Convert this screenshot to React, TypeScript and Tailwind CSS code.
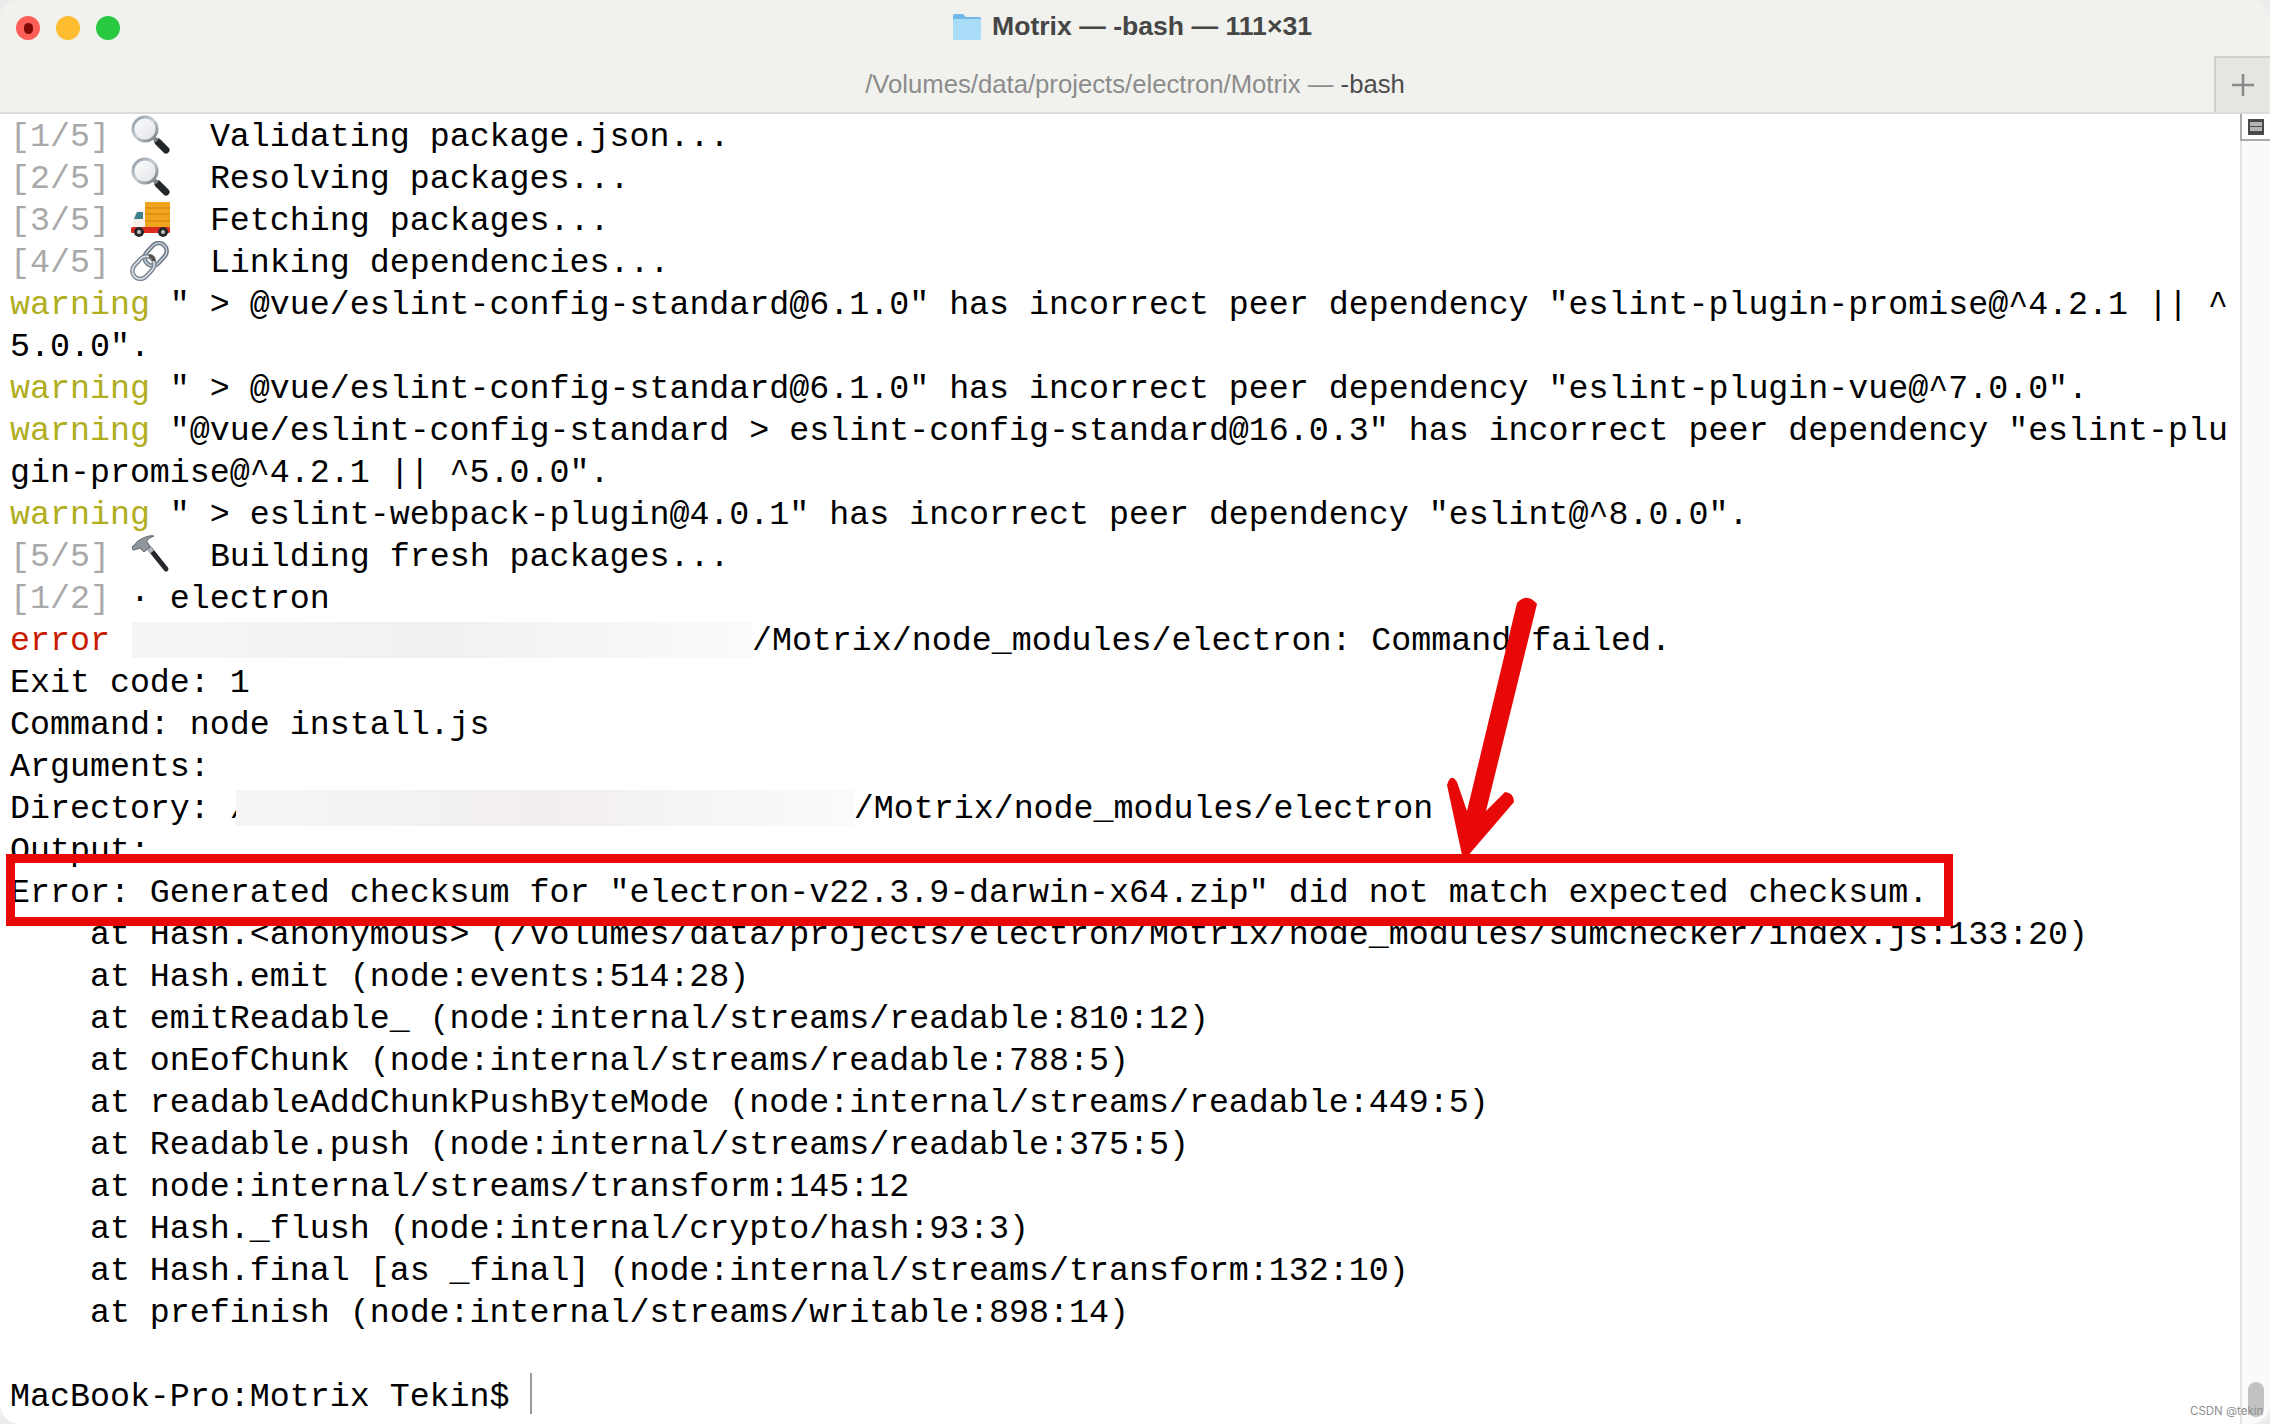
import React from 'react';

const Magnifier = () => (
    <svg viewBox="0 0 40 40" className="w-[40px] h-[40px] shrink-0 -translate-y-[3px]">
        <defs>
            <linearGradient id="lens" x1="0" y1="0" x2="1" y2="1">
                <stop offset="0" stopColor="#ffffff" />
                <stop offset="1" stopColor="#dfe2e6" />
            </linearGradient>
            <linearGradient id="ring" x1="0" y1="0" x2="1" y2="1">
                <stop offset="0" stopColor="#8f99a3" />
                <stop offset="0.5" stopColor="#c9ced3" />
                <stop offset="1" stopColor="#6f7780" />
            </linearGradient>
        </defs>
        <line x1="28" y1="27" x2="36" y2="35" stroke="#23272b" strokeWidth="7" strokeLinecap="round" />
        <line x1="23" y1="22" x2="27" y2="26" stroke="#7d848b" strokeWidth="4" />
        <circle cx="15" cy="14" r="12" fill="url(#lens)" stroke="url(#ring)" strokeWidth="3" />
    </svg>
);

const Truck = () => (
    <svg viewBox="0 0 40 40" className="w-[40px] h-[40px] shrink-0 -translate-y-[3px]">
        <rect x="15" y="3" width="25" height="26" fill="#f0a51c" />
        <path d="M15 9h25M15 15h25M15 22h25" stroke="#c97f12" strokeWidth="1.2" />
        <path d="M3 29v-11l4-7h8v18z" fill="#f4f1ea" />
        <path d="M4 20l3-7h6v7z" fill="#3d7f8c" />
        <rect x="1" y="28" width="39" height="6" rx="1.5" fill="#dd2a20" />
        <circle cx="9" cy="33" r="5" fill="#26282b" />
        <circle cx="9" cy="33" r="2" fill="#c8c8c8" />
        <circle cx="33" cy="33" r="5" fill="#26282b" />
        <circle cx="33" cy="33" r="2" fill="#c8c8c8" />
    </svg>
);

const ChainLink = () => (
    <svg viewBox="0 0 40 40" className="w-[40px] h-[40px] shrink-0 -translate-y-[3px]" fill="none">
        <g transform="rotate(42 26 13)">
            <rect x="18" y="1" width="16" height="25" rx="8" stroke="#6f7b87" strokeWidth="4.5" />
            <rect x="18" y="1" width="16" height="25" rx="8" stroke="#c4ccd3" strokeWidth="1.5" />
        </g>
        <g transform="rotate(42 13 27)">
            <rect x="5" y="14" width="16" height="25" rx="8" stroke="#7d8995" strokeWidth="4.5" />
            <rect x="5" y="14" width="16" height="25" rx="8" stroke="#dfe4e8" strokeWidth="1.5" />
        </g>
        <path d="M19 15c3 0 5 2 5 5" stroke="#5a5148" strokeWidth="4" />
    </svg>
);

const Hammer = () => (
    <svg viewBox="0 0 40 40" className="w-[40px] h-[40px] shrink-0 -translate-y-[3px]">
        <line x1="20" y1="14" x2="36" y2="34" stroke="#26282b" strokeWidth="5" strokeLinecap="round" />
        <line x1="16" y1="9" x2="22" y2="17" stroke="#aeb4b9" strokeWidth="5" />
        <path d="M2 12c3-2 4-5 6-6 6-4 12-6 16-5-5 2-7 4-7 6l3 5-6 5-4-4c-3 1-5 2-7 2z" fill="#8f979d" stroke="#5d646a" strokeWidth="1" />
    </svg>
);

const Row = ({ children }: { children?: React.ReactNode }) => (
    <div className="flex items-center h-[42px] whitespace-pre">{children}</div>
);

const Step = ({ n, icon, text }: { n: string; icon?: React.ReactNode; text: string }) => (
    <Row>
        <span className="text-[#a9a9a9]">{n} </span>
        {icon}
        <span>  {text}</span>
    </Row>
);

const Warn = ({ text }: { text: string }) => (
    <Row>
        <span className="text-[#b0ae1e]">warning</span>
        <span> {text}</span>
    </Row>
);

const stack = [
    'at Hash.<anonymous> (/Volumes/data/projects/electron/Motrix/node_modules/sumchecker/index.js:133:20)',
    'at Hash.emit (node:events:514:28)',
    'at emitReadable_ (node:internal/streams/readable:810:12)',
    'at onEofChunk (node:internal/streams/readable:788:5)',
    'at readableAddChunkPushByteMode (node:internal/streams/readable:449:5)',
    'at Readable.push (node:internal/streams/readable:375:5)',
    'at node:internal/streams/transform:145:12',
    'at Hash._flush (node:internal/crypto/hash:93:3)',
    'at Hash.final [as _final] (node:internal/streams/transform:132:10)',
    'at prefinish (node:internal/streams/writable:898:14)',
];

export default function App() {
    return (
        <div className="relative w-[2270px] h-[1424px] bg-[#ececec] overflow-hidden">
            <div className="flex flex-col h-full bg-white rounded-[20px] overflow-hidden">
                {/* Title bar */}
                <div className="bg-[#f1f2ee] border-b-2 border-[#dcdcdc] h-[114px] shrink-0 font-['Liberation_Sans',sans-serif]">
                    <div className="relative h-[54px] pr-[6px] flex items-center justify-center">
                        <div className="absolute left-[16px] top-[16px] flex gap-[16px]">
                            <div className="w-[24px] h-[24px] rounded-full bg-[#ff5f57] flex items-center justify-center">
                                <div className="w-[9px] h-[11px] rounded-full bg-[#7e0a05]" />
                            </div>
                            <div className="w-[24px] h-[24px] rounded-full bg-[#febc2e]" />
                            <div className="w-[24px] h-[24px] rounded-full bg-[#28c840]" />
                        </div>
                        <svg viewBox="0 0 30 28" className="w-[30px] h-[28px] mr-[10px]">
                            <path d="M1 3a2 2 0 0 1 2-2h8l3 3h13a2 2 0 0 1 2 2v4H1z" fill="#6fb8e8" />
                            <rect x="1" y="6" width="28" height="21" rx="2" fill="#a9dcf6" />
                        </svg>
                        <span className="text-[26.6px] font-bold text-[#464646]">Motrix — -bash — 111×31</span>
                    </div>
                    <div className="grid grid-cols-[56px_1fr_56px] h-[58px]">
                        <div />
                        <div className="flex items-center justify-center pt-[2px] text-[25.7px] text-[#8c8c8c] whitespace-pre">
                            /Volumes/data/projects/electron/Motrix — <span className="text-[#4c4c4c]">-bash</span>
                        </div>
                        <div className="mt-[2px] bg-[#e5e6e2] border-l-2 border-t-2 border-[#cfcfcb] flex items-center justify-center">
                            <svg viewBox="0 0 22 22" className="w-[22px] h-[22px]">
                                <path d="M11 0v22M0 11h22" stroke="#8a8a8a" strokeWidth="2.5" />
                            </svg>
                        </div>
                    </div>
                </div>

                {/* Terminal */}
                <div className="flex flex-1 min-h-0">
                    <div className="flex-1 pl-[10px] pt-[3px] text-black text-[33.3px] font-['Liberation_Mono',monospace] overflow-hidden">
                        <Step n="[1/5]" icon={<Magnifier />} text="Validating package.json..." />
                        <Step n="[2/5]" icon={<Magnifier />} text="Resolving packages..." />
                        <Step n="[3/5]" icon={<Truck />} text="Fetching packages..." />
                        <Step n="[4/5]" icon={<ChainLink />} text="Linking dependencies..." />
                        <Warn text={'" > @vue/eslint-config-standard@6.1.0" has incorrect peer dependency "eslint-plugin-promise@^4.2.1 || ^'} />
                        <Row>5.0.0".</Row>
                        <Warn text={'" > @vue/eslint-config-standard@6.1.0" has incorrect peer dependency "eslint-plugin-vue@^7.0.0".'} />
                        <Warn text={'"@vue/eslint-config-standard > eslint-config-standard@16.0.3" has incorrect peer dependency "eslint-plu'} />
                        <Row>gin-promise@^4.2.1 || ^5.0.0".</Row>
                        <Warn text={'" > eslint-webpack-plugin@4.0.1" has incorrect peer dependency "eslint@^8.0.0".'} />
                        <Step n="[5/5]" icon={<Hammer />} text="Building fresh packages..." />
                        <Row>
                            <span className="text-[#a9a9a9]">[1/2]</span>
                            <span> · electron</span>
                        </Row>
                        <Row>
                            <span className="text-[#c91b00]">error</span>
                            <span className="ml-[22px] w-[620px] h-[36px] -translate-y-[2px] bg-gradient-to-r from-[#f6f6f6] via-[#f2f0f0] to-[#fbfbfb]" />
                            <span>/Motrix/node_modules/electron: Command failed.</span>
                        </Row>
                        <Row>Exit code: 1</Row>
                        <Row>Command: node install.js</Row>
                        <Row>Arguments:</Row>
                        <Row>
                            <span>Directory: /</span>
                            <span className="ml-[-14px] w-[618px] h-[36px] -translate-y-[2px] bg-gradient-to-r from-[#f6f6f6] via-[#f2eeee] to-[#fbfbfb]" />
                            <span>/Motrix/node_modules/electron</span>
                        </Row>
                        <Row>Output:</Row>
                        <Row>Error: Generated checksum for "electron-v22.3.9-darwin-x64.zip" did not match expected checksum.</Row>
                        {stack.map((line) => (
                            <Row key={line}>{'    ' + line}</Row>
                        ))}
                        <Row />
                        <Row>
                            <span>MacBook-Pro:Motrix Tekin$ </span>
                            <span className="w-[2px] h-[41px] -translate-y-[5px] bg-[#999999]" />
                        </Row>
                    </div>
                    {/* Scrollbar */}
                    <div className="w-[30px] shrink-0 flex flex-col bg-[#fafafa] border-l-2 border-[#e4e4e4]">
                        <div className="h-[27px] -ml-[2px] bg-white border-l-2 border-b-2 border-[#ababab] flex items-center justify-center">
                            <div className="w-[16px] h-[16px] bg-[#4a4a4a] flex flex-col justify-center gap-[1px] px-[2px]">
                                <div className="h-[4px] bg-[#b5b5b5]" />
                                <div className="h-[4px] bg-[#b5b5b5]" />
                            </div>
                        </div>
                        <div className="flex-1 flex items-end justify-center pb-[7px]">
                            <div className="w-[16px] h-[35px] rounded-full bg-[#c2c2c2]" />
                        </div>
                    </div>
                </div>
            </div>

            {/* Annotations drawn over the screenshot */}
            <div className="absolute left-[6px] top-[854px] w-[1947px] h-[72px] border-[9px] border-[#e90808]" />
            <svg className="absolute left-0 top-0 w-[2270px] h-[1424px] pointer-events-none" viewBox="0 0 2270 1424">
                <path
                    d="M1517 603 Q1527 592 1537 604 L1486 811 L1505 792 Q1514 793 1514 802 L1466 858 L1462 855 L1447 785 Q1451 772 1457 782 L1467 811 Z"
                    fill="#e90808"
                />
            </svg>
            <div className="absolute left-[2190px] top-[1403px] text-[11.5px] text-[#8f8f8f] font-['Inter',sans-serif]">CSDN @tekin</div>
        </div>
    );
}
